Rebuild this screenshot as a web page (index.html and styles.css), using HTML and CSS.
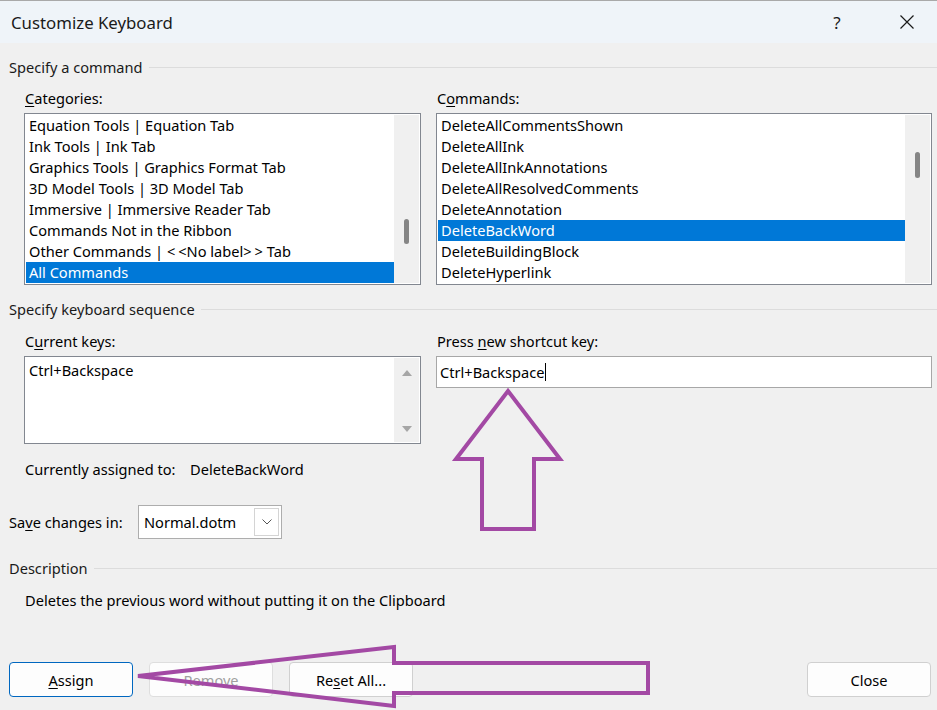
FILE: index.html
```html
<!DOCTYPE html>
<html>
<head>
<meta charset="utf-8">
<title>Customize Keyboard</title>
<link rel="stylesheet" href="styles.css">
</head>
<body>
<div class="titlebar">
  <div class="title">Customize Keyboard</div>
  <div class="tb-btn help">?</div>
  <div class="tb-btn close-x">
    <svg width="16" height="16" viewBox="0 0 16 16"><path d="M1.5 1.5 L14.5 14.5 M14.5 1.5 L1.5 14.5" stroke="#1a1a1a" stroke-width="1.2" fill="none"/></svg>
  </div>
</div>

<div class="group g1">Specify a command</div>
<div class="cols labels-row">
  <div class="label"><u>C</u>ategories:</div>
  <div class="label">C<u>o</u>mmands:</div>
</div>
<div class="cols lists-row">
  <div class="listbox">
    <div class="items">
      <div class="item">Equation Tools | Equation Tab</div>
      <div class="item">Ink Tools | Ink Tab</div>
      <div class="item">Graphics Tools | Graphics Format Tab</div>
      <div class="item">3D Model Tools | 3D Model Tab</div>
      <div class="item">Immersive | Immersive Reader Tab</div>
      <div class="item">Commands Not in the Ribbon</div>
      <div class="item">Other Commands | <span class="sp">&lt;</span>&lt;No label<span class="sp">&gt;</span>&gt; Tab</div>
      <div class="item sel">All Commands</div>
    </div>
    <div class="vscroll"><div class="thumb thumb-left"></div></div>
  </div>
  <div class="listbox">
    <div class="items">
      <div class="item">DeleteAllCommentsShown</div>
      <div class="item">DeleteAllInk</div>
      <div class="item">DeleteAllInkAnnotations</div>
      <div class="item">DeleteAllResolvedComments</div>
      <div class="item">DeleteAnnotation</div>
      <div class="item sel">DeleteBackWord</div>
      <div class="item">DeleteBuildingBlock</div>
      <div class="item">DeleteHyperlink</div>
    </div>
    <div class="vscroll"><div class="thumb thumb-right"></div></div>
  </div>
</div>

<div class="group g2">Specify keyboard sequence</div>
<div class="cols seq-row">
  <div class="col">
    <div class="label">C<u>u</u>rrent keys:</div>
    <div class="keysbox">
      <div class="keys-text">Ctrl+Backspace</div>
      <div class="keys-scroll">
        <svg width="10" height="6" viewBox="0 0 10 6"><path d="M0 6 L5 0 L10 6 Z" fill="#a6a6a6"/></svg>
        <svg width="10" height="6" viewBox="0 0 10 6"><path d="M0 0 L5 6 L10 0 Z" fill="#a6a6a6"/></svg>
      </div>
    </div>
    <div class="assigned"><span class="assigned-label">Currently assigned to:</span><span>DeleteBackWord</span></div>
  </div>
  <div class="col">
    <div class="label">Press <u>n</u>ew shortcut key:</div>
    <div class="shortcut"><span class="caret">Ctrl+Backspace</span></div>
  </div>
</div>

<div class="save-row">
  <div class="save-label">Sa<u>v</u>e changes in:</div>
  <div class="dropdown">
    <span class="dd-text">Normal.dotm</span>
    <div class="dd-btn">
      <svg width="10" height="6" viewBox="0 0 10 6"><path d="M0.5 0.5 L5 5 L9.5 0.5" stroke="#555" stroke-width="1" fill="none"/></svg>
    </div>
  </div>
</div>

<div class="group g3">Description</div>
<div class="desc">Deletes the previous word without putting it on the Clipboard</div>

<div class="buttons">
  <div class="btn primary"><u>A</u>ssign</div>
  <div class="btn disabled">Remove</div>
  <div class="btn">Re<u>s</u>et All...</div>
  <div class="btn close-btn">Close</div>
</div>

<svg class="annot" width="937" height="710" viewBox="0 0 937 710">
  <polygon points="508,391 560,459 534,459 534,529 482,529 482,459 456,459" fill="none" stroke="#a349a4" stroke-width="4" stroke-linejoin="miter"/>
  <polygon points="138,676 394,647 394,663 648,663 648,693 394,693 394,706" fill="none" stroke="#a349a4" stroke-width="4" stroke-linejoin="miter"/>
</svg>
</body>
</html>
```

FILE: styles.css
```css
html, body {
  margin: 0;
  padding: 0;
}
body {
  width: 937px;
  height: 710px;
  background: #f0f0f0;
  font-family: "Noto Sans", "Open Sans", sans-serif;
  font-size: 14.6px;
  color: #000;
  overflow: hidden;
  position: relative;
}
u {
  text-decoration: underline;
  text-underline-offset: 2px;
}
.sp { margin-right: 3px; }
.titlebar {
  height: 43px;
  box-sizing: border-box;
  background: #eff4f9;
  border-top: 1px solid #a9a9a9;
  display: flex;
  align-items: center;
  padding-left: 11px;
  padding-right: 7px;
}
.title {
  flex: 1;
  font-size: 16.8px;
  color: #1a1a1a;
}
.tb-btn {
  width: 46px;
  height: 42px;
  display: flex;
  align-items: center;
  justify-content: center;
}
.help {
  font-size: 17px;
  color: #1a1a1a;
  margin-right: 24px;
}
.group {
  display: flex;
  align-items: center;
  height: 20px;
  line-height: 20px;
  padding-left: 9px;
  color: #1a1a1a;
}
.group::after {
  content: "";
  flex: 1;
  height: 1px;
  background: #dcdcdc;
  margin-left: 6px;
}
.g1 { margin-top: 14px; }
.g2 { margin-top: 14px; }
.g3 { margin-top: 19px; }
.cols {
  display: grid;
  grid-template-columns: 397px 496px;
  column-gap: 15px;
  padding-left: 24px;
}
.label {
  height: 20px;
  line-height: 20px;
  padding-left: 1px;
}
.labels-row { margin-top: 11px; }
.lists-row { margin-top: 5px; }
.listbox {
  height: 172px;
  box-sizing: border-box;
  border: 1px solid #828790;
  background: #fff;
  padding: 1px;
  display: flex;
}
.items {
  flex: 1;
  overflow: hidden;
}
.item {
  height: 21px;
  line-height: 21px;
  padding-left: 3px;
  white-space: nowrap;
}
.item.sel {
  background: #0078d7;
  color: #fff;
}
.vscroll {
  width: 25px;
  background: #f0f0f0;
  display: flex;
  flex-direction: column;
  align-items: center;
}
.thumb {
  width: 5px;
  background: #858585;
  border-radius: 3px;
}
.thumb-left { height: 25px; margin-top: 104px; }
.thumb-right { height: 26px; margin-top: 37px; }
.seq-row { margin-top: 12px; }
.col .label { margin-bottom: 5px; }
.keysbox {
  height: 88px;
  box-sizing: border-box;
  border: 1px solid #828790;
  background: #fff;
  padding: 1px;
  display: flex;
}
.keys-text {
  flex: 1;
  padding-left: 3px;
  height: 24px;
  line-height: 24px;
}
.keys-scroll {
  width: 25px;
  background: #f0f0f0;
  display: flex;
  flex-direction: column;
  align-items: center;
  justify-content: space-between;
  padding: 12px 0 10px;
  box-sizing: border-box;
}
.assigned {
  margin-top: 15px;
  height: 20px;
  line-height: 20px;
  padding-left: 1px;
  display: flex;
}
.assigned-label { width: 165px; }
.shortcut {
  height: 32px;
  box-sizing: border-box;
  border: 1px solid #a7a7a7;
  background: #fff;
  padding-left: 3px;
  display: flex;
  align-items: center;
}
.caret {
  border-right: 1px solid #000;
  line-height: 18px;
}
.save-row {
  margin-top: 26px;
  display: flex;
  align-items: center;
  padding-left: 9px;
}
.save-label { width: 129px; }
.dropdown {
  width: 144px;
  height: 34px;
  box-sizing: border-box;
  border: 1px solid #adadad;
  background: #fff;
  display: flex;
  align-items: center;
  padding-left: 5px;
  padding-right: 2px;
}
.dd-text { flex: 1; }
.dd-btn {
  width: 25px;
  height: 28px;
  box-sizing: border-box;
  border: 1px solid #d4d4d4;
  display: flex;
  align-items: center;
  justify-content: center;
}
.desc {
  margin-top: 12px;
  padding-left: 25px;
  height: 20px;
  line-height: 20px;
}
.buttons {
  margin-top: 52px;
  display: flex;
  padding-left: 9px;
  padding-right: 6px;
  gap: 16px;
}
.btn {
  width: 124px;
  height: 35px;
  box-sizing: border-box;
  border: 1px solid #d0d0d0;
  border-radius: 4px;
  background: #fdfdfd;
  display: flex;
  align-items: center;
  justify-content: center;
}
.btn.primary {
  border-color: #0067c0;
}
.btn.disabled {
  color: #a0a0a0;
  border-color: #dedede;
}
.close-btn { margin-left: auto; }
.annot {
  position: absolute;
  left: 0;
  top: 0;
  pointer-events: none;
}
```
